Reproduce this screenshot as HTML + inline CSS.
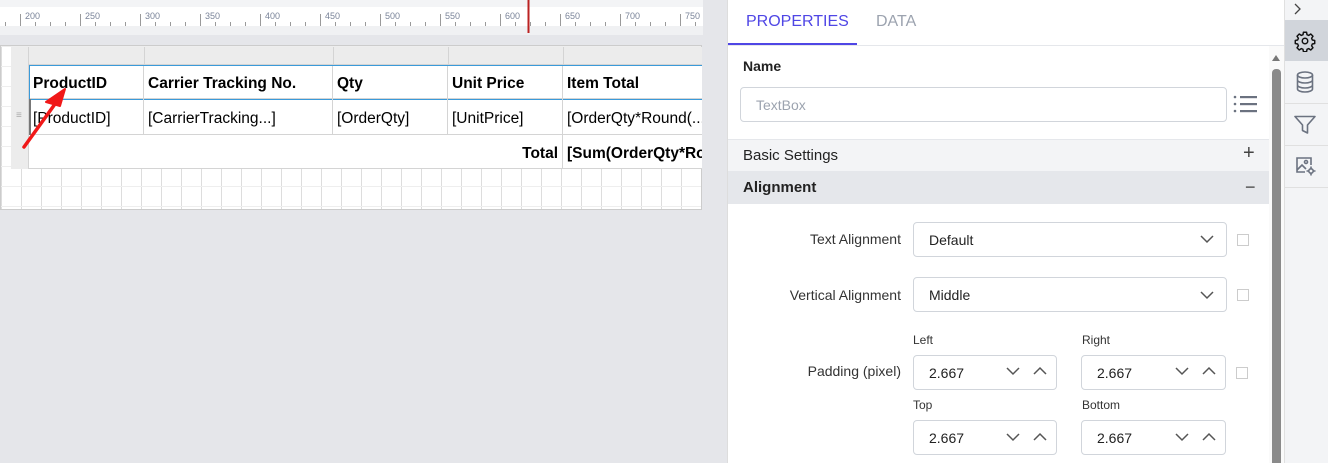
<!DOCTYPE html>
<html><head><meta charset="utf-8"><style>
*{box-sizing:border-box;margin:0;padding:0}
body{width:1328px;height:463px;overflow:hidden;background:#e5e6ea;font-family:"Liberation Sans",sans-serif;position:relative}
.a{position:absolute}
.cell{position:absolute;border-right:1px solid #d4d4d4;border-bottom:1px solid #d4d4d4;font-size:15.5px;color:#000;display:flex;align-items:center;padding-left:4px;padding-top:4px;white-space:nowrap;overflow:hidden}
.b{font-weight:bold}
.lbl{position:absolute;font-size:14px;color:#333;text-align:right;width:171px;left:730px}
.dd{position:absolute;border:1px solid #d1d5db;border-radius:4px;background:#fff;font-size:14px;color:#222;display:flex;align-items:center;padding-left:15px}
.chk{position:absolute;width:12px;height:12px;border:1px solid #ccc;background:#fff}
.sm{position:absolute;font-size:12px;color:#333}
</style></head><body>
<!-- ruler -->
<div class="a" style="left:0;top:0;width:703px;height:7px;background:#f3f4f6"></div>
<div class="a" style="left:0;top:7px;width:703px;height:19px;background:#fff"></div>
<div class="a" style="left:0;top:26px;width:703px;height:9px;background:#f0f1f3"></div>
<svg class="a" style="left:0;top:0" width="703" height="34" font-family="Liberation Sans" font-size="9" fill="#7a8499">
<g stroke="#9a9a9a" stroke-width="1" id="t"></g>
<line x1="528.5" y1="0" x2="528.5" y2="33" stroke="#b22" stroke-width="2"/>
</svg>
<!-- canvas -->
<div class="a" style="left:0;top:45px;width:702px;height:165px;background:#fff;border:1px solid #ccc;background-image:linear-gradient(#eee 1px,transparent 1px),linear-gradient(90deg,#ddd 1px,transparent 1px);background-size:20px 20px,20px 20px"></div>
<div class="a" style="left:11px;top:47px;width:691px;height:122px;background:#fff"></div>
<div class="a" style="left:11px;top:47px;width:18px;height:122px;background:#ececec;border-right:1px solid #d4d4d4"></div>
<div class="a" style="left:29px;top:47px;width:673px;height:18px;background:#ececec;border-bottom:1px solid #d4d4d4"></div>
<div class="a" style="left:144px;top:47px;width:1px;height:18px;background:#d4d4d4"></div>
<div class="a" style="left:333px;top:47px;width:1px;height:18px;background:#d4d4d4"></div>
<div class="a" style="left:448px;top:47px;width:1px;height:18px;background:#d4d4d4"></div>
<div class="a" style="left:563px;top:47px;width:1px;height:18px;background:#d4d4d4"></div>
<div class="cell b" style="left:29px;top:65px;width:115px;height:34px">ProductID</div>
<div class="cell b" style="left:144px;top:65px;width:189px;height:34px">Carrier Tracking No.</div>
<div class="cell b" style="left:333px;top:65px;width:115px;height:34px">Qty</div>
<div class="cell b" style="left:448px;top:65px;width:115px;height:34px">Unit Price</div>
<div class="cell b" style="left:563px;top:65px;width:139px;height:34px;border-right:none">Item Total</div>
<div class="a" style="left:29px;top:65px;width:673px;height:35px;border:1px solid #3a9ad9;border-right:none"></div>
<div class="cell" style="left:29px;top:99px;width:115px;height:36px">[ProductID]</div>
<div class="cell" style="left:144px;top:99px;width:189px;height:36px">[CarrierTracking...]</div>
<div class="cell" style="left:333px;top:99px;width:115px;height:36px">[OrderQty]</div>
<div class="cell" style="left:448px;top:99px;width:115px;height:36px">[UnitPrice]</div>
<div class="cell" style="left:563px;top:99px;width:139px;height:36px;border-right:none">[OrderQty*Round(...</div>
<div class="a" style="left:29px;top:99px;width:2px;height:36px;background:#777"></div>
<div class="cell b" style="left:29px;top:135px;width:534px;height:34px;justify-content:flex-end;padding-right:4px">Total</div>
<div class="cell b" style="left:563px;top:135px;width:139px;height:34px;border-right:none">[Sum(OrderQty*Round</div>
<div class="a" style="left:16px;top:110px;font-size:10px;color:#aaa">≡</div>
<svg class="a" style="left:0;top:0" width="710" height="215"><line x1="24" y1="147" x2="55" y2="104" stroke="#f01818" stroke-width="3.5" stroke-linecap="round"/><polygon points="65,89 46,102 60,106" fill="#f01818" stroke="#f01818" stroke-width="2" stroke-linejoin="round"/></svg>
<!-- right panel -->
<div class="a" style="left:727px;top:0;width:557px;height:463px;background:#fff;border-left:1px solid #ddd"></div>
<div class="a" style="left:746px;top:13px;font-size:16px;color:#4f46e5">PROPERTIES</div>
<div class="a" style="left:876px;top:13px;font-size:16px;color:#9ca3af">DATA</div>
<div class="a" style="left:728px;top:43px;width:129px;height:2px;background:#4f46e5"></div>
<div class="a" style="left:728px;top:45px;width:556px;height:1px;background:#e5e7eb"></div>
<div class="a" style="left:743px;top:58px;font-size:14px;font-weight:bold;color:#222">Name</div>
<div class="a" style="left:740px;top:87px;width:487px;height:35px;border:1px solid #d1d5db;border-radius:4px;font-size:14px;color:#9ca3af;padding:9px 0 0 15px">TextBox</div>
<svg class="a" style="left:1232px;top:94px" width="28" height="22"><g fill="#6b7280"><circle cx="3" cy="3" r="1.3"/><circle cx="3" cy="10" r="1.3"/><circle cx="3" cy="17" r="1.3"/><rect x="8" y="2" width="17" height="2.2"/><rect x="8" y="9" width="17" height="2.2"/><rect x="8" y="16" width="17" height="2.2"/></g></svg>
<div class="a" style="left:728px;top:139px;width:541px;height:32px;background:#f3f4f6;border-top:1px solid #e5e7eb"></div>
<div class="a" style="left:743px;top:147px;font-size:15px;color:#222">Basic Settings</div>
<div class="a" style="left:1243px;top:142px;font-size:20px;color:#444">+</div>
<div class="a" style="left:728px;top:171px;width:541px;height:33px;background:#e5e7eb"></div>
<div class="a" style="left:743px;top:179px;font-size:15px;font-weight:bold;color:#222">Alignment</div>
<div class="a" style="left:1245px;top:177px;font-size:18px;color:#444">−</div>
<div class="lbl" style="top:231px">Text Alignment</div>
<div class="dd" style="left:913px;top:222px;width:314px;height:35px">Default</div>
<div class="lbl" style="top:287px">Vertical Alignment</div>
<div class="dd" style="left:913px;top:277px;width:314px;height:35px">Middle</div>
<svg class="a" style="left:1199px;top:234px" width="16" height="10"><path d="M2 2l6 6 6-6" fill="none" stroke="#555" stroke-width="1.5"/></svg>
<svg class="a" style="left:1199px;top:290px" width="16" height="10"><path d="M2 2l6 6 6-6" fill="none" stroke="#555" stroke-width="1.5"/></svg>
<div class="chk" style="left:1237px;top:234px"></div>
<div class="chk" style="left:1237px;top:289px"></div>
<div class="chk" style="left:1236px;top:367px"></div>
<div class="sm" style="left:913px;top:333px">Left</div>
<div class="sm" style="left:1082px;top:333px">Right</div>
<div class="sm" style="left:913px;top:398px">Top</div>
<div class="sm" style="left:1082px;top:398px">Bottom</div>
<div class="lbl" style="top:363px">Padding (pixel)</div>
<div class="dd" style="left:913px;top:355px;width:144px;height:35px">2.667</div>
<div class="dd" style="left:1081px;top:355px;width:145px;height:35px">2.667</div>
<div class="dd" style="left:913px;top:420px;width:144px;height:35px">2.667</div>
<div class="dd" style="left:1081px;top:420px;width:145px;height:35px">2.667</div>
<svg class="a" style="left:0;top:0" width="1328" height="463"><g fill="none" stroke="#555" stroke-width="1.5">
<path d="M1007 368l6 6 6-6M1034 374l6-6 6 6"/><path d="M1176 368l6 6 6-6M1203 374l6-6 6 6"/>
<path d="M1007 434l6 6 6-6M1034 440l6-6 6 6"/><path d="M1176 434l6 6 6-6M1203 440l6-6 6 6"/></g></svg>
<!-- scrollbar -->
<div class="a" style="left:1269px;top:46px;width:15px;height:417px;background:#fafafa"></div>
<svg class="a" style="left:1271px;top:54px" width="10" height="8"><polygon points="5,1 9,7 1,7" fill="#777"/></svg>
<div class="a" style="left:1272px;top:69px;width:9px;height:394px;background:#8a8a8a;border-radius:4px 4px 0 0"></div>
<!-- sidebar -->
<div class="a" style="left:1284px;top:0;width:44px;height:463px;background:#f3f4f6;border-left:1px solid #e0e0e0"></div>
<svg class="a" style="left:1293px;top:3px" width="10" height="12"><path d="M2 1l5 5-5 5" fill="none" stroke="#444" stroke-width="1.3"/></svg>
<div class="a" style="left:1285px;top:20px;width:43px;height:41px;background:#d1d5db"></div>
<div class="a" style="left:1285px;top:103px;width:43px;height:1px;background:#e0e0e0"></div>
<div class="a" style="left:1285px;top:145px;width:43px;height:1px;background:#e0e0e0"></div>
<div class="a" style="left:1285px;top:187px;width:43px;height:1px;background:#e0e0e0"></div>
<svg class="a" style="left:1294px;top:30px" width="22" height="22" viewBox="0 0 24 24"><g fill="none" stroke="#111" stroke-width="1.6"><path d="M10.3 2.5h3.4l.5 2.6 1.9.8 2.2-1.5 2.4 2.4-1.5 2.2.8 1.9 2.6.5v3.4l-2.6.5-.8 1.9 1.5 2.2-2.4 2.4-2.2-1.5-1.9.8-.5 2.6h-3.4l-.5-2.6-1.9-.8-2.2 1.5-2.4-2.4 1.5-2.2-.8-1.900-2.6-.5v-3.4l2.6-.5.8-1.9-1.5-2.2 2.4-2.4 2.2 1.5 1.9-.8z" stroke-linejoin="round"/><circle cx="12" cy="12" r="3"/></g></svg>
<svg class="a" style="left:1296px;top:71px" width="18" height="22" viewBox="0 0 18 22"><g fill="none" stroke="#6b7280" stroke-width="1.6"><ellipse cx="9" cy="4" rx="7.5" ry="3"/><path d="M1.5 4v14c0 1.7 3.4 3 7.5 3s7.5-1.3 7.5-3V4M1.5 9c0 1.7 3.4 3 7.5 3s7.5-1.3 7.5-3M1.5 14c0 1.7 3.4 3 7.5 3s7.5-1.3 7.5-3"/></g></svg>
<svg class="a" style="left:1294px;top:115px" width="22" height="20" viewBox="0 0 22 20"><path d="M1 1.5h20l-7.5 8.5v8l-5-2.5v-5.5z" fill="none" stroke="#6b7280" stroke-width="1.6" stroke-linejoin="round"/></svg>
<svg class="a" style="left:1295px;top:156px" width="22" height="20" viewBox="0 0 22 20"><g fill="none" stroke="#6b7280" stroke-width="1.6"><path d="M10 16H2V2h14v7"/><path d="M2 14l5-5 4 4"/><circle cx="11" cy="6" r="1.5"/><circle cx="16" cy="15" r="2.2"/><path d="M16 10.5v2M16 17.5v2M11.5 15h2M18.5 15h2"/></g></svg>
<script>
var g=document.getElementById('t'),s='';
for(var x=5;x<703;x+=15){var major=((x-20)%60===0);
s+='<line x1="'+(x+.5)+'" y1="'+(major?14:22)+'" x2="'+(x+.5)+'" y2="26"/>';}
g.innerHTML=s;
var svg=g.parentNode,t='';
for(var i=0;i<12;i++){t+='<text x="'+(25+i*60)+'" y="19" stroke="none">'+(200+i*50)+'</text>';}
svg.insertAdjacentHTML('beforeend',t);
</script>
</body></html>
